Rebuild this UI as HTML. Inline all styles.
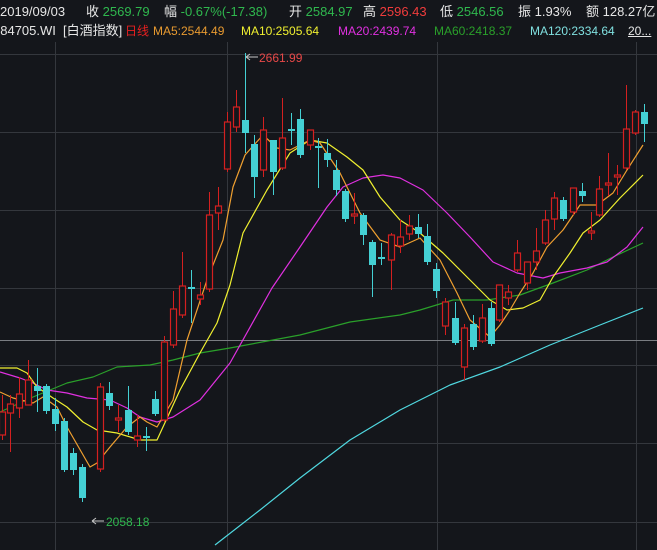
<!DOCTYPE html>
<html><head><meta charset="utf-8"><style>
html,body{margin:0;padding:0;background:#14161b;width:657px;height:550px;overflow:hidden}
.t{position:absolute;font-family:"Liberation Sans","Noto Sans CJK SC",sans-serif;font-size:13px;white-space:nowrap;color:#e6e6e6;line-height:16px}
.g{color:#2fb84e}.r{color:#f03c3c}
</style></head><body>
<svg width="657" height="550" style="position:absolute;left:0;top:0">
<g stroke="#34373d" stroke-width="1">
<line x1="0" y1="54.5" x2="657" y2="54.5"/><line x1="0" y1="132.5" x2="657" y2="132.5"/>
<line x1="0" y1="210.5" x2="657" y2="210.5"/><line x1="0" y1="288.5" x2="657" y2="288.5"/>
<line x1="0" y1="365.5" x2="657" y2="365.5"/><line x1="0" y1="443.5" x2="657" y2="443.5"/>
<line x1="0" y1="522.5" x2="657" y2="522.5"/>
<line x1="55.5" y1="42" x2="55.5" y2="550"/><line x1="227.5" y1="42" x2="227.5" y2="550"/>
<line x1="437.5" y1="42" x2="437.5" y2="550"/><line x1="636.5" y1="42" x2="636.5" y2="550"/>
</g>
<line x1="0" y1="340.5" x2="657" y2="340.5" stroke="#7a7d82"/>
<g fill="none" stroke-width="1.2" stroke-linejoin="round">
<polyline stroke="#50d8e0" points="215,545 260,510 300,478 350,440 400,410 450,385 500,367 550,345 600,325 643,308"/>
<polyline stroke="#2aa02a" points="0,412 33,397 67,383 93,377 117,367 150,365 173,360 200,353 230,348 300,335 350,322 400,315 420,310 453,300 487,300 520,295 553,283 587,270 613,257 643,243"/>
<polyline stroke="#e030e0" points="0,372 20,378 33,383 47,390 67,393 87,398 110,400 127,408 140,417 157,422 173,417 200,400 230,363 272,288 300,247 327,207 343,187 363,178 383,175 400,178 423,190 447,213 470,237 493,262 517,273 543,278 560,273 587,268 607,262 627,247 643,227"/>
<polyline stroke="#f0f030" points="0,368 17,368 27,373 37,387 53,398 67,407 83,422 97,430 117,433 140,440 157,440 180,390 200,353 217,323 230,285 243,233 267,190 290,153 310,140 327,143 347,157 363,170 380,197 400,220 420,233 443,253 470,280 490,300 507,310 523,308 540,300 553,277 570,253 583,233 600,220 620,198 643,175"/>
<polyline stroke="#f0a030" points="0,392 13,398 33,403 43,397 57,407 67,427 90,467 97,463 110,447 127,427 140,417 147,422 157,427 173,400 187,340 207,280 223,240 233,187 245,155 263,135 277,148 290,150 310,140 320,143 340,173 360,213 380,240 400,247 420,238 440,260 457,293 470,320 490,337 500,325 510,310 520,293 533,273 547,247 563,230 580,205 597,205 613,193 627,170 643,145"/>
</g>
<path stroke="#d42020" stroke-width="1" fill="none" d="M2.5 395V440M10.5 395V452M19.5 377V418M28.5 360V405M100.5 383V472M118.5 405V432M137.5 415V447M164.5 336V422M173.5 291V348M182.5 252V318M200.5 282V305M209.5 192V292M218.5 187V230M227.5 112V172M236.5 90V132M263.5 117V177M282.5 98V170M310.5 130V150M354.5 193V224M391.5 233V290M400.5 220V253M409.5 215V240M445.5 298V335M464.5 324V380M482.5 304V343M499.5 285V322M508.5 285V305M517.5 240V272M527.5 262V290M536.5 228V270M545.5 210V245M554.5 192V230M573.5 188V215M591.5 212V240M599.5 176V217M608.5 153V196M617.5 165V195M626.5 85V170M635.5 110V135"/>
<g fill="#14161b" stroke="#d42020" stroke-width="1.2">
<rect x="-0.5" y="412" width="6" height="23"/><rect x="7.5" y="404" width="6" height="9"/><rect x="16.5" y="394" width="6" height="14"/><rect x="25.5" y="380" width="6" height="25"/>
<rect x="97.5" y="387" width="6" height="82"/><rect x="115.5" y="418" width="6" height="2"/><rect x="134.5" y="436" width="6" height="4"/>
<rect x="161.5" y="342" width="6" height="78"/><rect x="170.5" y="309" width="6" height="36"/><rect x="179.5" y="286" width="6" height="29"/>
<rect x="197.5" y="295" width="6" height="4"/><rect x="206.5" y="215" width="6" height="74"/><rect x="215.5" y="206" width="6" height="7"/>
<rect x="224.5" y="122" width="6" height="47"/><rect x="233.5" y="107" width="6" height="20"/><rect x="260.5" y="130" width="6" height="40"/>
<rect x="279.5" y="138" width="6" height="30"/><rect x="307.5" y="130" width="6" height="15"/><rect x="351.5" y="214" width="6" height="2"/>
<rect x="388.5" y="235" width="6" height="25"/><rect x="397.5" y="237" width="6" height="9"/><rect x="406.5" y="226" width="6" height="8"/>
<rect x="442.5" y="302" width="6" height="24"/><rect x="461.5" y="328" width="6" height="39"/><rect x="479.5" y="318" width="6" height="23"/>
<rect x="496.5" y="285" width="6" height="35"/><rect x="505.5" y="292" width="6" height="6"/><rect x="514.5" y="253" width="6" height="17"/>
<rect x="524.5" y="262" width="6" height="21"/><rect x="533.5" y="251" width="6" height="11"/><rect x="542.5" y="220" width="6" height="23"/>
<rect x="551.5" y="198" width="6" height="21"/><rect x="570.5" y="188" width="6" height="24"/><rect x="588.5" y="231" width="6" height="2"/>
<rect x="596.5" y="189" width="6" height="26"/><rect x="605.5" y="183" width="6" height="2"/><rect x="614.5" y="175" width="6" height="2"/>
<rect x="623.5" y="129" width="6" height="39"/><rect x="632.5" y="112" width="6" height="21"/>
</g>
<path stroke="#44d0d4" stroke-width="1" fill="none" d="M37.5 368V412M46.5 384V414M55.5 398V431M64.5 418V472M73.5 448V475M82.5 464V502M109.5 382V410M128.5 386V435M146.5 427V451M155.5 391V416M191.5 270V323M245.5 53V153M254.5 135V198M273.5 140V195M291.5 113V145M300.5 109V158M318.5 138V188M327.5 139V167M336.5 160V196M345.5 189V222M363.5 213V245M372.5 240V297M381.5 243V265M418.5 214V238M427.5 224V265M436.5 263V298M455.5 302V345M473.5 315V350M491.5 302V346M563.5 197V221M582.5 183V202M644.5 104V142"/>
<g fill="#44d0d4">
<rect x="34" y="386" width="7" height="5"/><rect x="43" y="386" width="7" height="25"/><rect x="52" y="409" width="7" height="15"/>
<rect x="61" y="421" width="7" height="49"/><rect x="70" y="453" width="7" height="17"/><rect x="79" y="467" width="7" height="31"/>
<rect x="106" y="393" width="7" height="13"/><rect x="125" y="410" width="7" height="22"/><rect x="143" y="436" width="7" height="2"/>
<rect x="152" y="399" width="7" height="15"/><rect x="188" y="287" width="7" height="2"/><rect x="242" y="120" width="7" height="13"/>
<rect x="251" y="144" width="7" height="33"/><rect x="270" y="140" width="7" height="32"/><rect x="288" y="129" width="7" height="2"/>
<rect x="297" y="119" width="7" height="36"/><rect x="315" y="146" width="7" height="2"/><rect x="324" y="153" width="7" height="7"/>
<rect x="333" y="170" width="7" height="20"/><rect x="342" y="191" width="7" height="28"/><rect x="360" y="215" width="7" height="20"/>
<rect x="369" y="242" width="7" height="23"/><rect x="378" y="257" width="7" height="2"/><rect x="415" y="227" width="7" height="7"/>
<rect x="424" y="236" width="7" height="26"/><rect x="433" y="269" width="7" height="22"/><rect x="452" y="318" width="7" height="25"/>
<rect x="470" y="324" width="7" height="23"/><rect x="488" y="308" width="7" height="36"/><rect x="560" y="200" width="7" height="19"/>
<rect x="579" y="191" width="7" height="5"/><rect x="641" y="112" width="7" height="12"/>
</g>
<g stroke="#c8c8c8" stroke-width="1" fill="none">
<path d="M246 57H258M246 57l4-3M246 57l4 3"/>
<path d="M92 521H104M92 521l4-3M92 521l4 3"/>
</g>
<text x="259" y="62" fill="#e84848" font-family="Liberation Sans" font-size="12">2661.99</text>
<text x="106" y="526" fill="#2fb84e" font-family="Liberation Sans" font-size="12">2058.18</text>
</svg>
<div class="t" style="left:0;top:4px">2019/09/03</div>
<div class="t" style="left:86px;top:4px">收 <span class="g">2569.79</span></div>
<div class="t" style="left:164px;top:4px">幅 <span class="g">-0.67%(-17.38)</span></div>
<div class="t" style="left:289px;top:4px">开 <span class="g">2584.97</span></div>
<div class="t" style="left:363px;top:4px">高 <span class="r">2596.43</span></div>
<div class="t" style="left:440px;top:4px">低 <span class="g">2546.56</span></div>
<div class="t" style="left:518px;top:4px">振 1.93%</div>
<div class="t" style="left:586px;top:4px">额 128.27亿</div>
<div class="t" style="left:-7px;top:23px">884705.WI</div>
<div class="t" style="left:63px;top:23px">[白酒指数]</div>
<div class="t" style="left:125px;top:23px;font-size:12px;color:#e82020">日线</div>
<div class="t" style="left:153px;top:23px;font-size:12px;color:#e89a30">MA5:2544.49</div>
<div class="t" style="left:241px;top:23px;font-size:12px;color:#f0f030">MA10:2505.64</div>
<div class="t" style="left:338px;top:23px;font-size:12px;color:#e030e0">MA20:2439.74</div>
<div class="t" style="left:434px;top:23px;font-size:12px;color:#2aa02a">MA60:2418.37</div>
<div class="t" style="left:530px;top:23px;font-size:12px;color:#80e0e0">MA120:2334.64</div>
<div class="t" style="left:628px;top:23px;font-size:12px;text-decoration:underline">20...</div>
</body></html>
